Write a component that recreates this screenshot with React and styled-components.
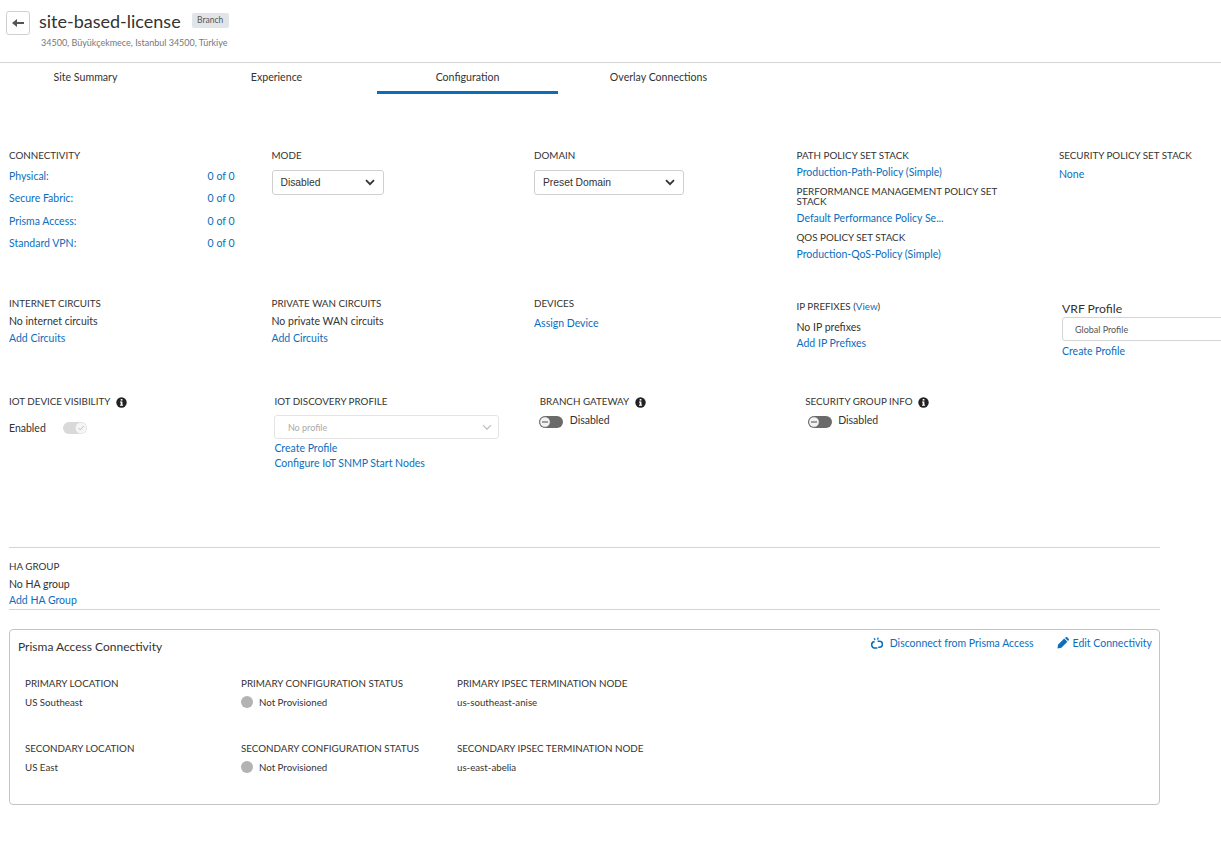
import React from "react";
import styled, { createGlobalStyle } from "styled-components";

const GlobalStyle = createGlobalStyle`
  html, body {
    margin: 0;
    padding: 0;
    background: #fff;
    overflow: hidden;
  }
  body {
    font-family: Lato, "Open Sans", sans-serif;
    font-size: 10.5px;
    color: #333;
  }
`;

const Page = styled.div`
  width: 1221px;
  height: 841px;
  overflow: hidden;
`;

const Header = styled.header`
  height: 63px;
  box-sizing: border-box;
  border-bottom: 1px solid #d4d4d4;
  display: flex;
  align-items: flex-start;
  padding: 11px 0 0 6px;
  gap: 9px;
`;

const BackButton = styled.button`
  width: 24px;
  height: 24px;
  padding: 0;
  box-sizing: border-box;
  border: 1px solid #d0d0d0;
  border-radius: 3px;
  background: #fff;
  display: flex;
  align-items: center;
  justify-content: center;
`;

const TitleBlock = styled.div`
  display: flex;
  flex-direction: column;
`;

const TitleRow = styled.div`
  display: flex;
  align-items: center;
  gap: 11px;
  height: 22px;
`;

const Title = styled.h1`
  margin: -2px 0 0;
  font-size: 18px;
  font-weight: 400;
  line-height: 22px;
  color: #333;
`;

const Badge = styled.span`
  width: 37px;
  height: 15px;
  background: #e1e5ea;
  border-radius: 2px;
  text-align: center;
  line-height: 14px;
  font-size: 8.5px;
  color: #555;
  margin-top: -3px;
`;

const Address = styled.div`
  margin: 4px 0 0 2px;
  font-size: 9px;
  line-height: 12px;
  color: #777;
`;

const Tabs = styled.nav`
  display: flex;
  gap: 10px;
  margin-left: -5px;
`;

const Tab = styled.div`
  width: 181px;
  height: 31px;
  box-sizing: border-box;
  padding-top: 7px;
  line-height: 14px;
  text-align: center;
  font-size: 10.6px;
  color: #333;
  border-bottom: 3px solid ${(p) => (p.$active ? "#0a6ebd" : "transparent")};
`;

const Content = styled.main`
  padding: 56px 0 0 9px;
`;

const Grid = styled.section`
  display: grid;
  grid-template-columns: repeat(5, ${(p) => p.$col || 262.5}px);
  height: ${(p) => p.$height}px;
`;

const Cell = styled.div`
  min-width: 0;
`;

const Label = styled.div`
  display: flex;
  align-items: center;
  gap: 5.5px;
  font-size: 9.8px;
  line-height: 10px;
  color: #333;
  margin-top: ${(p) => p.$top || 0}px;
  max-width: 205px;
`;

const Text = styled.div`
  font-size: 10.5px;
  line-height: 16px;
  color: #333;
  margin-top: ${(p) => p.$top || 0}px;
`;

const Link = styled.a`
  display: block;
  font-size: 10.5px;
  line-height: ${(p) => p.$line || 16}px;
  color: #0a6ebd;
  margin-top: ${(p) => p.$top || 0}px;
  margin-left: ${(p) => p.$left || 0}px;
`;

const InlineLink = styled.span`
  color: #0a6ebd;
`;

const CountRow = styled.div`
  display: flex;
  justify-content: space-between;
  width: 225.5px;
  font-size: 10.5px;
  line-height: 16px;
  color: #0a6ebd;
  margin-top: ${(p) => p.$top}px;
`;

const SelectBox = styled.div`
  width: ${(p) => p.$width}px;
  height: 25px;
  margin-top: 10px;
  box-sizing: border-box;
  border: 1px solid #d0d0d0;
  border-radius: 3px;
  padding: 0 8px;
  display: flex;
  align-items: center;
  justify-content: space-between;
  font-family: "Liberation Sans", Arial, sans-serif;
  font-size: 10.3px;
  color: #333;
`;

const Chevron = styled.svg`
  width: 10px;
  height: 7px;
  fill: none;
  stroke: ${(p) => p.$color || "#333"};
  stroke-width: ${(p) => p.$weight || 1.8};
`;

const VrfTitle = styled.div`
  margin: 2px 0 0 3px;
  font-size: 12.2px;
  line-height: 17px;
  color: #333;
`;

const VrfSelect = styled.div`
  width: 200px;
  height: 24px;
  margin-left: 3px;
  box-sizing: border-box;
  border: 1px solid #d4d4d4;
  border-radius: 3px;
  padding: 0 12px;
  display: flex;
  align-items: center;
  font-size: 9px;
  color: #555;
`;

const DisabledSelect = styled.div`
  width: 225px;
  height: 24px;
  margin: 9px 0 0 -0.5px;
  box-sizing: border-box;
  border: 1px solid #e4e4e4;
  border-radius: 3px;
  padding: 0 6px 0 13px;
  display: flex;
  align-items: center;
  justify-content: space-between;
  font-size: 9px;
  color: #aaa;
`;

const ToggleRow = styled.div`
  display: flex;
  align-items: flex-start;
  gap: ${(p) => p.$gap}px;
  margin-top: ${(p) => p.$top}px;
  font-size: 10.5px;
  line-height: 16px;
  color: #333;
`;

const Toggle = styled.span`
  width: 24px;
  height: 12px;
  flex: none;
  margin-top: ${(p) => p.$drop}px;
  margin-left: ${(p) => p.$left || 0}px;
  display: flex;
  align-items: center;
  justify-content: ${(p) => (p.$on ? "flex-end" : "flex-start")};
  border-radius: 6px;
  background: ${(p) => (p.$on ? "#d9d9d9" : "#6a6a6a")};
`;

const Knob = styled.svg`
  width: 12px;
  height: 12px;
`;

const Rule = styled.hr`
  width: 1151px;
  margin: 0;
  border: 0;
  border-top: 1px solid #d4d4d4;
`;

const HaSection = styled.section`
  height: 61px;
  box-sizing: border-box;
  padding-top: 13px;
`;

const Card = styled.section`
  width: 1151px;
  height: 176px;
  margin-top: 19px;
  box-sizing: border-box;
  border: 1px solid #c4c4c4;
  border-radius: 4px;
  padding: 0 7px 0 8px;
`;

const CardHead = styled.div`
  display: flex;
  justify-content: space-between;
  align-items: flex-start;
  height: 45px;
`;

const CardTitle = styled.h2`
  margin: 9px 0 0;
  font-size: 12px;
  font-weight: 400;
  line-height: 16px;
  color: #333;
`;

const Actions = styled.div`
  display: flex;
  gap: 23px;
  margin-top: 5px;
`;

const Action = styled.a`
  display: flex;
  align-items: center;
  gap: ${(p) => p.$gap}px;
  font-size: 10.5px;
  line-height: 16px;
  color: #0a6ebd;
`;

const ActionIcon = styled.svg`
  width: 12px;
  height: 12px;
  flex: none;
`;

const InfoGrid = styled.div`
  display: grid;
  grid-template-columns: 216px 216px 1fr;
  grid-auto-rows: 65px;
  padding: 3px 0 0 7px;
`;

const InfoCell = styled.div`
  display: flex;
  flex-direction: column;
  gap: 7px;
`;

const InfoLabel = styled.div`
  font-size: 9.8px;
  line-height: 11px;
  color: #333;
`;

const InfoValue = styled.div`
  display: flex;
  align-items: center;
  gap: 6px;
  font-size: 9.7px;
  line-height: 12px;
  color: #333;
`;

const Dot = styled.span`
  width: 12px;
  height: 12px;
  border-radius: 50%;
  background: #b3b3b3;
`;

const Info = styled.svg`
  width: 11px;
  height: 11px;
  flex: none;
  margin: -1px 0 -3px;
`;

const InfoIcon = () => (
  <Info viewBox="0 0 11 11">
    <circle cx="5.5" cy="5.5" r="5.2" fill="#222" />
    <rect x="4.7" y="2" width="1.7" height="1.6" fill="#fff" />
    <path d="M4 4.5 H6.4 V7.7 H7.1 V8.7 H4 V7.7 H4.7 V5.5 H4 Z" fill="#fff" />
  </Info>
);

const BackArrow = () => (
  <svg width="12" height="10" viewBox="0 0 12 10">
    <path d="M0 5 L5 1 V4 H12 V6 H5 V9 Z" fill="#555" />
  </svg>
);

const UnlinkIcon = () => (
  <ActionIcon viewBox="0 0 12 12" fill="none" stroke="#0a6ebd">
    <path d="M3.6 4.6 A3.2 3.2 0 0 0 4.2 11 H6.4" strokeWidth="1.6" />
    <path d="M6.6 4.2 H8.4 A3 3 0 0 1 8.6 10.2 L7.2 10.2" strokeWidth="1.6" />
    <path d="M4 3 L3.2 1.2 M6.6 2.6 L7.2 0.6" strokeWidth="1.4" />
  </ActionIcon>
);

const PencilIcon = () => (
  <ActionIcon viewBox="0 0 12 12">
    <path d="M0.4 11.6 L1.2 7.6 L7.2 1.6 L10.4 4.8 L4.4 10.8 Z" fill="#0a6ebd" />
    <path d="M8 0.9 L9 0 Q9.6 -0.2 10.2 0.3 L11.8 1.9 Q12.2 2.4 11.8 3 L11.1 4 Z" fill="#0a6ebd" />
  </ActionIcon>
);

const ChevronDown = (props) => (
  <Chevron viewBox="0 0 10 7" {...props}>
    <path d="M1 1.2 L5 5.2 L9 1.2" />
  </Chevron>
);

const OnKnob = () => (
  <Knob viewBox="0 0 12 12">
    <circle cx="6" cy="6" r="5.5" fill="#f5f5f5" />
    <path d="M3.5 6 L5.4 8 L8.7 4" fill="none" stroke="#c4c4c4" strokeWidth="1" />
  </Knob>
);

const OffKnob = () => (
  <Knob viewBox="0 0 12 12">
    <circle cx="6" cy="6" r="5.2" fill="#f2f2f2" stroke="#6a6a6a" strokeWidth="0.6" />
    <path d="M3 6 H9" stroke="#666" strokeWidth="1.2" />
  </Knob>
);

const connectivity = ["Physical:", "Secure Fabric:", "Prisma Access:", "Standard VPN:"];

const infoRows = [
  ["PRIMARY LOCATION", "US Southeast"],
  ["PRIMARY CONFIGURATION STATUS", "Not Provisioned", true],
  ["PRIMARY IPSEC TERMINATION NODE", "us-southeast-anise"],
  ["SECONDARY LOCATION", "US East"],
  ["SECONDARY CONFIGURATION STATUS", "Not Provisioned", true],
  ["SECONDARY IPSEC TERMINATION NODE", "us-east-abelia"],
];

const App = () => {
  return (
    <Page>
      <GlobalStyle />
      <Header>
        <BackButton aria-label="Back">
          <BackArrow />
        </BackButton>
        <TitleBlock>
          <TitleRow>
            <Title>site-based-license</Title>
            <Badge>Branch</Badge>
          </TitleRow>
          <Address>34500, Büyükçekmece, Istanbul 34500, Türkiye</Address>
        </TitleBlock>
      </Header>

      <Tabs>
        <Tab>Site Summary</Tab>
        <Tab>Experience</Tab>
        <Tab $active>Configuration</Tab>
        <Tab>Overlay Connections</Tab>
      </Tabs>

      <Content>
        <Grid $height={148}>
          <Cell>
            <Label>CONNECTIVITY</Label>
            {connectivity.map((name, i) => (
              <CountRow key={name} $top={i === 0 ? 8 : 6.4}>
                <span>{name}</span>
                <span>0 of 0</span>
              </CountRow>
            ))}
          </Cell>
          <Cell>
            <Label>MODE</Label>
            <SelectBox $width={112}>
              Disabled
              <ChevronDown />
            </SelectBox>
          </Cell>
          <Cell>
            <Label>DOMAIN</Label>
            <SelectBox $width={150}>
              Preset Domain
              <ChevronDown />
            </SelectBox>
          </Cell>
          <Cell>
            <Label>PATH POLICY SET STACK</Label>
            <Link $top={4}>Production-Path-Policy (Simple)</Link>
            <Label $top={6}>PERFORMANCE MANAGEMENT POLICY SET STACK</Label>
            <Link $top={4}>Default Performance Policy Se...</Link>
            <Label $top={6}>QOS POLICY SET STACK</Label>
            <Link $top={4}>Production-QoS-Policy (Simple)</Link>
          </Cell>
          <Cell>
            <Label>SECURITY POLICY SET STACK</Label>
            <Link $top={6}>None</Link>
          </Cell>
        </Grid>

        <Grid $height={98}>
          <Cell>
            <Label>INTERNET CIRCUITS</Label>
            <Text $top={5}>No internet circuits</Text>
            <Link $top={1}>Add Circuits</Link>
          </Cell>
          <Cell>
            <Label>PRIVATE WAN CIRCUITS</Label>
            <Text $top={5}>No private WAN circuits</Text>
            <Link $top={1}>Add Circuits</Link>
          </Cell>
          <Cell>
            <Label>DEVICES</Label>
            <Link $top={7}>Assign Device</Link>
          </Cell>
          <Cell>
            <Label $top={3}>
              <span>
                IP PREFIXES (<InlineLink>View</InlineLink>)
              </span>
            </Label>
            <Text $top={8}>No IP prefixes</Text>
            <Link>Add IP Prefixes</Link>
          </Cell>
          <Cell>
            <VrfTitle>VRF Profile</VrfTitle>
            <VrfSelect>Global Profile</VrfSelect>
            <Link $top={2} $left={3}>
              Create Profile
            </Link>
          </Cell>
        </Grid>

        <Grid $height={151} $col={265.4}>
          <Cell>
            <Label>
              IOT DEVICE VISIBILITY <InfoIcon />
            </Label>
            <ToggleRow $top={14} $gap={17}>
              Enabled
              <Toggle $on $drop={2}>
                <OnKnob />
              </Toggle>
            </ToggleRow>
          </Cell>
          <Cell>
            <Label>IOT DISCOVERY PROFILE</Label>
            <DisabledSelect>
              No profile
              <ChevronDown $color="#bbb" $weight={1.2} />
            </DisabledSelect>
            <Link $top={2} $line={15}>
              Create Profile
            </Link>
            <Link $line={15}>Configure IoT SNMP Start Nodes</Link>
          </Cell>
          <Cell>
            <Label>
              BRANCH GATEWAY <InfoIcon />
            </Label>
            <ToggleRow $top={6} $gap={7}>
              <Toggle $drop={4} $left={-1}>
                <OffKnob />
              </Toggle>
              Disabled
            </ToggleRow>
          </Cell>
          <Cell>
            <Label>
              SECURITY GROUP INFO <InfoIcon />
            </Label>
            <ToggleRow $top={6} $gap={6}>
              <Toggle $drop={4} $left={3}>
                <OffKnob />
              </Toggle>
              Disabled
            </ToggleRow>
          </Cell>
        </Grid>

        <Rule />
        <HaSection>
          <Label>HA GROUP</Label>
          <Text $top={5}>No HA group</Text>
          <Link>Add HA Group</Link>
        </HaSection>
        <Rule />

        <Card>
          <CardHead>
            <CardTitle>Prisma Access Connectivity</CardTitle>
            <Actions>
              <Action $gap={7}>
                <UnlinkIcon />
                Disconnect from Prisma Access
              </Action>
              <Action $gap={4}>
                <PencilIcon />
                Edit Connectivity
              </Action>
            </Actions>
          </CardHead>
          <InfoGrid>
            {infoRows.map(([label, value, dot]) => (
              <InfoCell key={label}>
                <InfoLabel>{label}</InfoLabel>
                <InfoValue>
                  {dot && <Dot />}
                  {value}
                </InfoValue>
              </InfoCell>
            ))}
          </InfoGrid>
        </Card>
      </Content>
    </Page>
  );
};

export default App;
